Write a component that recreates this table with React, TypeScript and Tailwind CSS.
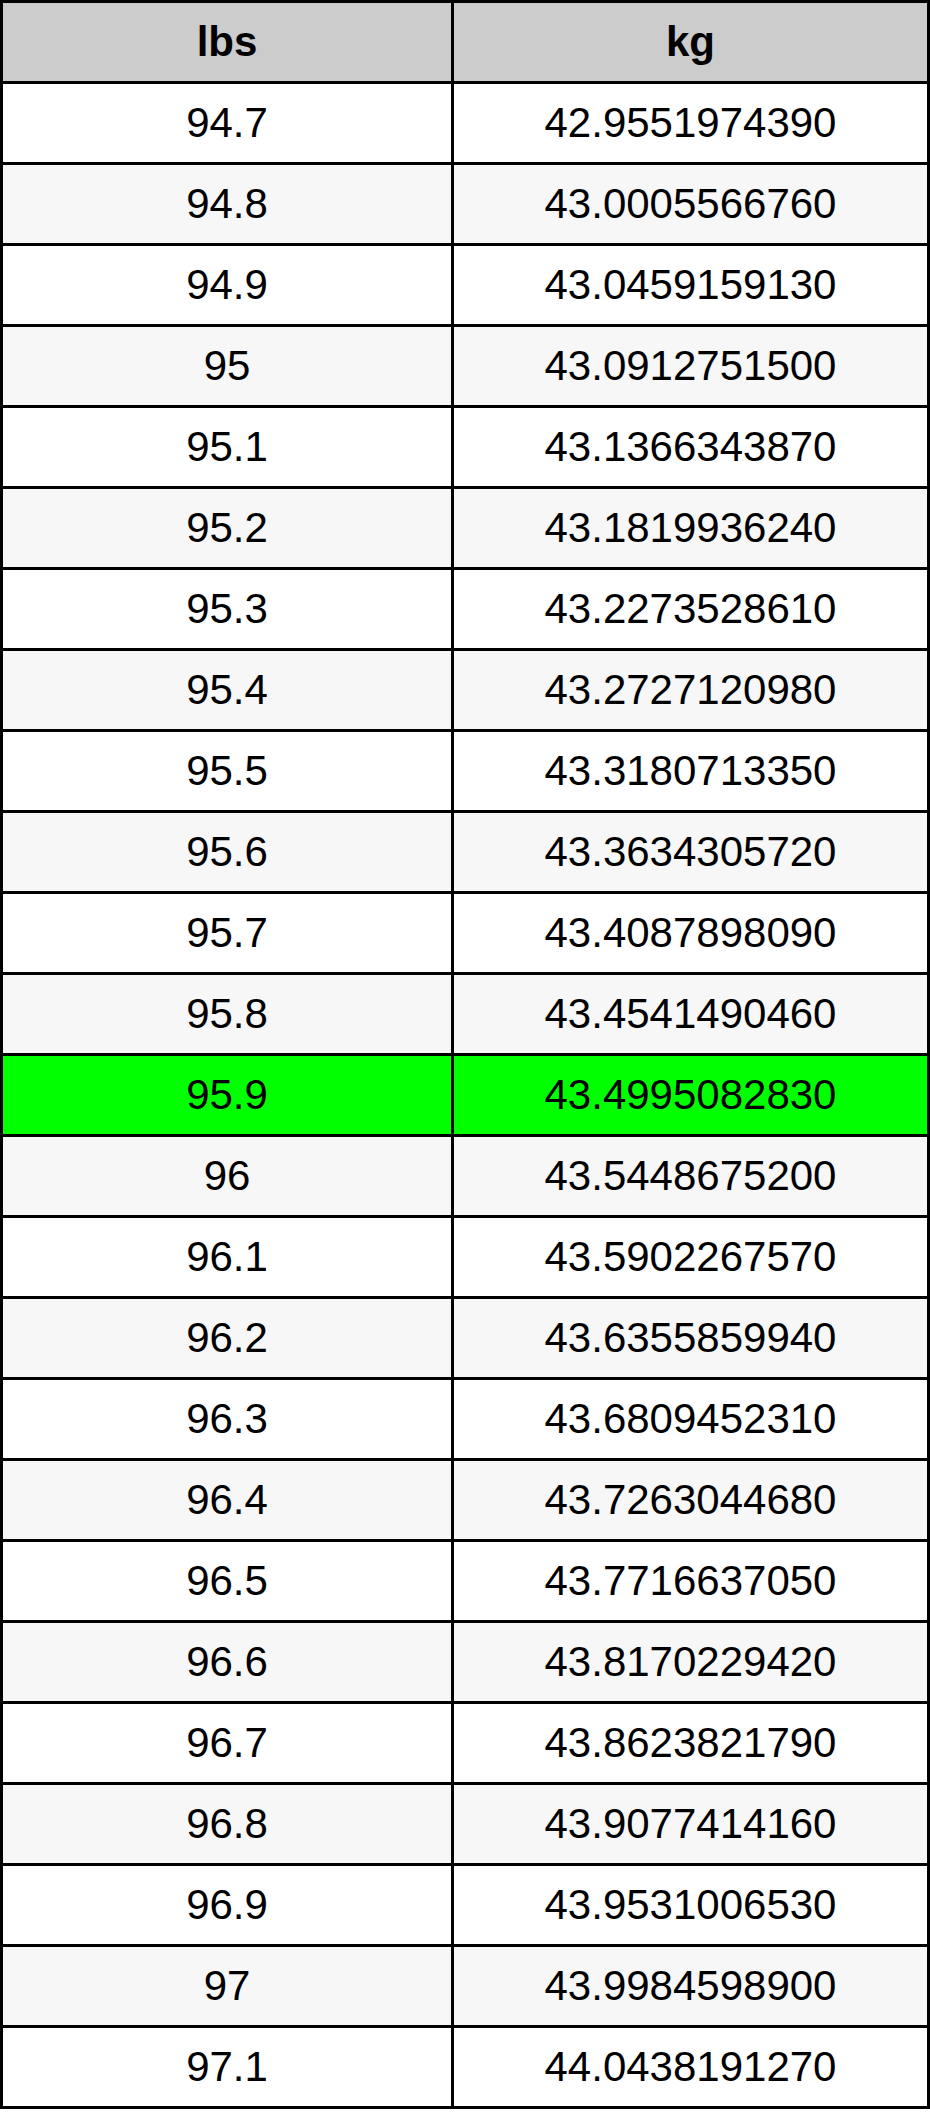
const ROWS: [string, string][] = [
  ['94.7', '42.9551974390'],
  ['94.8', '43.0005566760'],
  ['94.9', '43.0459159130'],
  ['95', '43.0912751500'],
  ['95.1', '43.1366343870'],
  ['95.2', '43.1819936240'],
  ['95.3', '43.2273528610'],
  ['95.4', '43.2727120980'],
  ['95.5', '43.3180713350'],
  ['95.6', '43.3634305720'],
  ['95.7', '43.4087898090'],
  ['95.8', '43.4541490460'],
  ['95.9', '43.4995082830'],
  ['96', '43.5448675200'],
  ['96.1', '43.5902267570'],
  ['96.2', '43.6355859940'],
  ['96.3', '43.6809452310'],
  ['96.4', '43.7263044680'],
  ['96.5', '43.7716637050'],
  ['96.6', '43.8170229420'],
  ['96.7', '43.8623821790'],
  ['96.8', '43.9077414160'],
  ['96.9', '43.9531006530'],
  ['97', '43.9984598900'],
  ['97.1', '44.0438191270'],
];

const HIGHLIGHT = '95.9';

function Row({ lbs, kg, bg, bold }: { lbs: string; kg: string; bg: string; bold?: boolean }) {
  const cell = `flex h-[81px] items-center justify-center border-r-[3px] border-b-[3px] border-black ${bg} ${
    bold ? 'font-bold' : ''
  }`;
  return (
    <div className="flex">
      <div className={`${cell} w-[451px]`}>{lbs}</div>
      <div className={`${cell} w-[476px]`}>{kg}</div>
    </div>
  );
}

export default function App() {
  return (
    <div className="w-[930px] bg-white">
      <div
        className="w-[930px] border-l-[3px] border-t-[3px] border-black text-[42px] leading-none text-black"
        style={{ fontFamily: '"Liberation Sans", Arial, sans-serif' }}
      >
        <Row lbs="lbs" kg="kg" bg="bg-[#cccccc]" bold />
        {ROWS.map(([lbs, kg], i) => {
          const bg = lbs === HIGHLIGHT ? 'bg-[#00ff00]' : i % 2 === 0 ? 'bg-white' : 'bg-[#f7f7f7]';
          return <Row key={lbs} lbs={lbs} kg={kg} bg={bg} />;
        })}
      </div>
    </div>
  );
}
